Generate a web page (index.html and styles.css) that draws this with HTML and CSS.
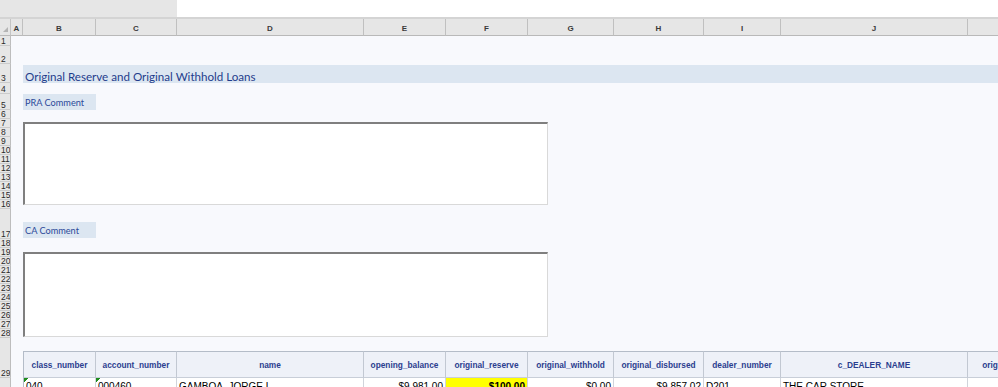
FILE: index.html
```html
<!DOCTYPE html>
<html>
<head>
<meta charset="utf-8">
<link rel="stylesheet" href="styles.css">
</head>
<body>
<div class="top"><div class="namebox"></div><div class="fx"></div></div>
<div class="sheet">
  <div class="corner"><i class="sel"></i></div>
  <div class="cols">
    <div class="ch">A</div><div class="ch">B</div><div class="ch">C</div><div class="ch">D</div>
    <div class="ch">E</div><div class="ch">F</div><div class="ch">G</div><div class="ch">H</div>
    <div class="ch">I</div><div class="ch">J</div><div class="ch">K</div><div class="ch">L</div>
  </div>
  <div class="rows">
    <div class="rh">1</div><div class="rh">2</div><div class="rh">3</div><div class="rh">4</div><div class="rh">5</div>
    <div class="rh">6</div><div class="rh">7</div><div class="rh">8</div><div class="rh">9</div><div class="rh">10</div>
    <div class="rh">11</div><div class="rh">12</div><div class="rh">13</div><div class="rh">14</div><div class="rh">15</div>
    <div class="rh">16</div><div class="rh">17</div><div class="rh">18</div><div class="rh">19</div><div class="rh">20</div>
    <div class="rh">21</div><div class="rh">22</div><div class="rh">23</div><div class="rh">24</div><div class="rh">25</div>
    <div class="rh">26</div><div class="rh">27</div><div class="rh">28</div><div class="rh">29</div><div class="rh">30</div>
  </div>
  <div class="body">
    <div class="title">Original Reserve and Original Withhold Loans</div>
    <div class="label pra">PRA Comment</div>
    <div class="comment c1"></div>
    <div class="label ca">CA Comment</div>
    <div class="comment c2"></div>

    <div class="hgap"></div>
    <div class="th first">class_number</div>
    <div class="th">account_number</div>
    <div class="th">name</div>
    <div class="th">opening_balance</div>
    <div class="th">original_reserve</div>
    <div class="th">original_withhold</div>
    <div class="th">original_disbursed</div>
    <div class="th">dealer_number</div>
    <div class="th">c_DEALER_NAME</div>
    <div class="th">original_balance</div>
    <div class="th">dealer_state</div>

    <div class="dgap"></div>
    <div class="td first flag">040</div>
    <div class="td flag">000460</div>
    <div class="td">GAMBOA, JORGE L</div>
    <div class="td num">$9,981.00</div>
    <div class="td num hl">$100.00</div>
    <div class="td num">$0.00</div>
    <div class="td num">$9,857.02</div>
    <div class="td">D201</div>
    <div class="td">THE CAR STORE</div>
    <div class="td num">$9,857.02</div>
    <div class="td">TX</div>
  </div>
</div>
</body>
</html>
```

FILE: styles.css
```css
html, body {
  margin: 0;
  padding: 0;
  overflow: hidden;
}
body {
  width: 998px;
  height: 387px;
  background: #f8f9fd;
  font-family: "Liberation Sans", Arial, sans-serif;
}

.top {
  display: flex;
  height: 17px;
  background: #e6e6e6;
  border-bottom: 2px solid #d4d4d4;
}
.namebox { width: 177px; }
.fx { flex: 1; background: #ffffff; }

.sheet {
  display: grid;
  grid-template-columns: 11px 1fr;
  grid-template-rows: 17px auto;
}

.corner {
  background: #e6e6e6;
  border-right: 1px solid #c4c4c4;
  border-bottom: 1px solid #b9b9b9;
  box-sizing: border-box;
  display: flex;
  justify-content: flex-end;
  align-items: flex-end;
  padding: 0 2px 3px 0;
}
.sel {
  width: 0;
  height: 0;
  border-left: 5px solid transparent;
  border-bottom: 5px solid #b4b4b4;
}

.cols, .body {
  display: grid;
  grid-template-columns: 12px 73px 81px 187px 82px 82px 86px 90px 77px 187px 95px 200px;
}
.rows, .body {
  grid-template-rows: 10px 18px 19px 11px 16px repeat(11, 9px) 30px repeat(11, 9px) 40px 20px;
}
.rows { display: grid; }

.ch {
  background: #e6e6e6;
  border-right: 1px solid #c0c0c0;
  border-bottom: 1px solid #b9b9b9;
  box-sizing: border-box;
  display: flex;
  justify-content: center;
  align-items: center;
  padding-top: 3px;
  font-size: 8px;
  font-weight: bold;
  color: #3a3a3a;
}

.rh {
  background: #e6e6e6;
  border-right: 1px solid #bdbdbd;
  border-bottom: 1px solid #cbcbcb;
  box-sizing: border-box;
  display: flex;
  align-items: flex-end;
  padding-left: 1px;
  font-family: "Liberation Sans Narrow", "Liberation Sans", sans-serif;
  font-size: 8.5px;
  line-height: 8px;
  color: #2a2a2a;
  overflow: hidden;
}

.title {
  grid-row: 3;
  grid-column: 2 / -1;
  margin-top: 1px;
  background: #dce6f1;
  color: #1f3d8c;
  font-family: Lato, "Open Sans", sans-serif;
  font-size: 11.6px;
  display: flex;
  align-items: center;
  padding: 4px 0 0 2px;
}

.label {
  grid-column: 2;
  background: #dce6f1;
  color: #2c4a9a;
  font-family: Lato, "Open Sans", sans-serif;
  font-size: 9.2px;
  display: flex;
  align-items: center;
  padding: 0 0 0 2px;
  height: 16px;
  box-sizing: border-box;
}
.pra { grid-row: 5; }
.ca { grid-row: 17; align-self: end; margin-bottom: 1px; }

.comment {
  grid-column: 2 / 9;
  justify-self: start;
  align-self: start;
  width: 525px;
  background: #ffffff;
  border-top: 2px solid #7f7f7f;
  border-left: 2px solid #7f7f7f;
  border-right: 1px solid #d9d9d9;
  border-bottom: 1px solid #d9d9d9;
  box-sizing: border-box;
}
.c1 { grid-row: 6 / 17; margin-top: 12px; height: 83px; }
.c2 { grid-row: 18 / 29; margin-top: 13px; height: 85px; }

.hgap { grid-row: 29; }
.dgap { grid-row: 30; }

.th {
  grid-row: 29;
  align-self: end;
  height: 27px;
  box-sizing: border-box;
  background: #eef1f8;
  border-top: 1px solid #b4bcc8;
  border-bottom: 1px solid #c8ced8;
  border-right: 1px solid #c2c8d2;
  color: #2b3e8f;
  font-size: 8.3px;
  font-weight: bold;
  display: flex;
  justify-content: center;
  align-items: center;
  white-space: nowrap;
  overflow: hidden;
}
.th.first { border-left: 1px solid #b4bcc8; }

.td {
  grid-row: 30;
  box-sizing: border-box;
  background: #ffffff;
  border-right: 1px solid #d0d4db;
  font-size: 10px;
  line-height: 12px;
  color: #000;
  padding: 3px 2px 0 2px;
  white-space: nowrap;
  overflow: hidden;
}
.td.first { border-left: 1px solid #b4bcc8; }
.td.num { text-align: right; }
.td.hl { background: #ffff00; font-weight: bold; }
.td.flag {
  background: linear-gradient(135deg, #1e8c1e 3px, transparent 3px) no-repeat, #ffffff;
}
```
